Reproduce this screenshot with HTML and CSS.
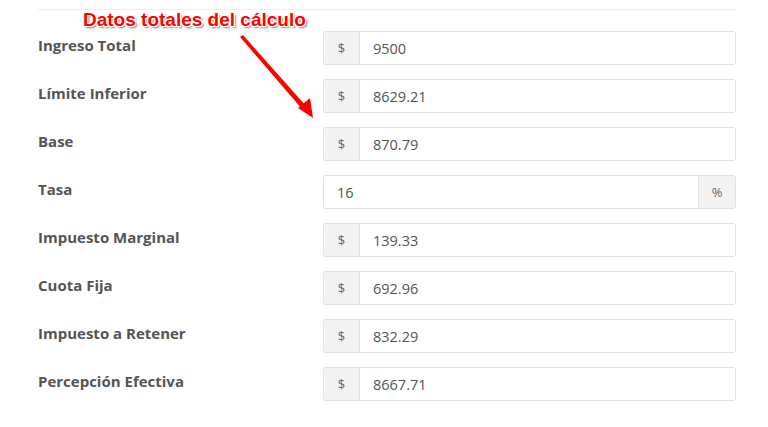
FILE: index.html
```html
<!DOCTYPE html>
<html>
<head>
    <title>Cálculo de impuesto</title>
    <link rel="stylesheet" href="styles.css">
</head>
<body>
    <div class="panel">
        <hr class="divider">
        <form class="calc">
            <div class="row">
                <label>Ingreso Total</label>
                <div class="group"><span class="addon">$</span><input type="text" value="9500"></div>
            </div>
            <div class="row">
                <label>Límite Inferior</label>
                <div class="group"><span class="addon">$</span><input type="text" value="8629.21"></div>
            </div>
            <div class="row">
                <label>Base</label>
                <div class="group"><span class="addon">$</span><input type="text" value="870.79"></div>
            </div>
            <div class="row">
                <label>Tasa</label>
                <div class="group"><input type="text" value="16"><span class="addon addon-right">%</span></div>
            </div>
            <div class="row">
                <label>Impuesto Marginal</label>
                <div class="group"><span class="addon">$</span><input type="text" value="139.33"></div>
            </div>
            <div class="row">
                <label>Cuota Fija</label>
                <div class="group"><span class="addon">$</span><input type="text" value="692.96"></div>
            </div>
            <div class="row">
                <label>Impuesto a Retener</label>
                <div class="group"><span class="addon">$</span><input type="text" value="832.29"></div>
            </div>
            <div class="row">
                <label>Percepción Efectiva</label>
                <div class="group"><span class="addon">$</span><input type="text" value="8667.71"></div>
            </div>
        </form>

        <!-- annotation drawn over the form -->
        <div class="note">Datos totales del cálculo</div>
        <svg class="arrow" width="768" height="427" viewBox="0 0 768 427">
            <polygon points="240,37 243,35 306,106 302,109" fill="#ff0000"/>
            <polygon points="313,118 298,108 310,98" fill="#ff0000"/>
        </svg>
    </div>
</body>
</html>
```

FILE: styles.css
```css
body {
    margin: 0;
    background: #fff;
    font-family: "Open Sans", "Noto Sans", sans-serif;
    font-size: 14px;
    color: #555;
}

.panel {
    position: relative;
    width: 698px;
    padding: 9px 0 0 38px;
}

.divider {
    margin: 0 0 21px 0;
    border: none;
    border-top: 1px solid #eee;
}

.row {
    display: flex;
    align-items: center;
    height: 34px;
    margin-bottom: 14px;
}

.row label {
    width: 285px;
    font-weight: bold;
    font-size: 15px;
    color: #555;
    position: relative;
    top: -3px;
}

.group {
    display: flex;
    width: 413px;
    height: 34px;
    border: 1px solid #e1e1e1;
    border-radius: 3px;
    box-sizing: border-box;
    overflow: hidden;
}

.addon {
    width: 35px;
    flex: none;
    display: flex;
    align-items: center;
    justify-content: center;
    background: #f3f3f3;
    border-right: 1px solid #e1e1e1;
    color: #666;
    font-size: 13px;
}

.addon-right {
    width: 36px;
    border-right: none;
    border-left: 1px solid #e1e1e1;
}

.group input {
    flex: 1;
    min-width: 0;
    border: none;
    padding: 0 13px;
    font-family: "Open Sans", "Noto Sans", sans-serif;
    font-size: 14.5px;
    color: #555;
    background: #fff;
}

.note {
    position: absolute;
    left: 83px;
    top: 9px;
    font-family: "Liberation Sans", Arial, sans-serif;
    font-weight: bold;
    font-size: 19px;
    color: #ff0000;
    text-shadow: -1px -1px 0 #fff, 1px -1px 0 #fff, -1px 1px 0 #fff, 1px 1px 0 #fff, 2px 2px 2px rgba(0,0,0,0.5);
}

.arrow {
    position: absolute;
    left: 0;
    top: 0;
    pointer-events: none;
}
```
